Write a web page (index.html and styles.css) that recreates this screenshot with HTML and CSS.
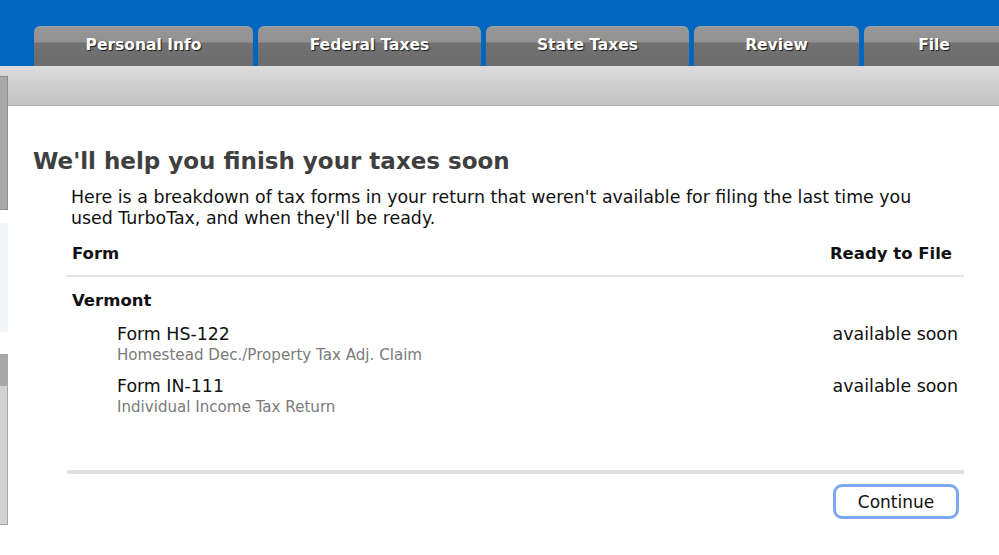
FILE: index.html
```html
<!DOCTYPE html>
<html>
<head>
<meta charset="utf-8">
<link rel="stylesheet" href="styles.css">
</head>
<body>
<div class="app">
  <header class="topbar">
    <nav class="tabs">
      <div class="tab t1">Personal Info</div>
      <div class="tab t2">Federal Taxes</div>
      <div class="tab t3">State Taxes</div>
      <div class="tab t4">Review</div>
      <div class="tab t5">File</div>
    </nav>
  </header>
  <div class="toolbar"></div>
  <div class="body">
    <aside class="side">
      <div class="side-a"></div>
      <div class="side-b"></div>
      <div class="side-c"><div class="side-c-top"></div></div>
    </aside>
    <main class="content">
      <h1 class="title">We'll help you finish your taxes soon</h1>
      <p class="intro">Here is a breakdown of tax forms in your return that weren't available for filing the last time you used TurboTax, and when they'll be ready.</p>
      <div class="table">
        <div class="thead">
          <span>Form</span>
          <span>Ready to File</span>
        </div>
        <div class="state">Vermont</div>
        <div class="row">
          <div class="form">
            <div class="fname">Form HS-122</div>
            <div class="fdesc">Homestead Dec./Property Tax Adj. Claim</div>
          </div>
          <div class="status">available soon</div>
        </div>
        <div class="row">
          <div class="form">
            <div class="fname">Form IN-111</div>
            <div class="fdesc">Individual Income Tax Return</div>
          </div>
          <div class="status">available soon</div>
        </div>
      </div>
      <div class="footer">
        <button class="btn">Continue</button>
      </div>
    </main>
  </div>
</div>
</body>
</html>
```
FILE: styles.css
```css
* { box-sizing: border-box; }
html, body { margin: 0; padding: 0; }
body {
  width: 999px;
  height: 555px;
  overflow: hidden;
  background: #fff;
  font-family: "DejaVu Sans", "Lucida Grande", Verdana, sans-serif;
}
.topbar {
  height: 66px;
  background: #0066c0;
  padding-top: 26px;
  overflow: hidden;
}
.tabs {
  display: flex;
  gap: 5px;
  padding-left: 34px;
  height: 40px;
}
.tab {
  flex: none;
  height: 40px;
  border-radius: 6px 6px 0 0;
  background: linear-gradient(#a2a2a2 0, #969696 2px, #929292 16px, #727272 17px, #6c6c6c 100%);
  color: #fff;
  font-weight: bold;
  font-size: 15.5px;
  text-align: center;
  line-height: 38px;
  text-shadow: 1px 1px 1px #1e1e1e;
}
.t1 { width: 219px; }
.t2 { width: 223px; }
.t3 { width: 203px; }
.t4 { width: 165px; }
.t5 { width: 140px; }
.toolbar {
  height: 40px;
  background: linear-gradient(#dcdcdc, #c3c3c3);
  border-bottom: 1px solid #b8b8b8;
}
.body {
  display: flex;
}
.side {
  width: 8px;
  flex: none;
  display: flex;
  flex-direction: column;
  margin-top: -30px;
}
.side-a {
  height: 134px;
  background: #a9a9a9;
  border: 1px solid #8e8e8e;
  border-left: 0;
}
.side-b {
  margin-top: 13px;
  height: 109px;
  background: #f4f5f7;
}
.side-c {
  margin-top: 22px;
  height: 171px;
  background: #d2d2d2;
  border: 1px solid #a6a6a6;
  border-left: 0;
}
.side-c-top {
  height: 31px;
  background: #a8a8a8;
}
.content {
  flex: 1;
  padding-left: 25px;
  padding-right: 35px;
}
.title {
  margin: 40px 0 0 0;
  font-size: 23px;
  font-weight: bold;
  color: #3f3f3f;
  line-height: 30px;
}
.intro {
  margin: 11px 0 0 38px;
  font-size: 17.4px;
  line-height: 21px;
  color: #111;
  width: 880px;
}
.table {
  margin-left: 34px;
}
.thead {
  display: flex;
  justify-content: space-between;
  font-weight: bold;
  font-size: 16.5px;
  color: #111;
  padding: 14px 12px 11px 5px;
  border-bottom: 2px solid #e2e2e2;
  line-height: 21px;
}
.state {
  font-weight: bold;
  font-size: 16.5px;
  color: #111;
  padding: 13px 0 0 5px;
  margin-bottom: 3px;
  line-height: 21px;
}
.row {
  display: flex;
  justify-content: space-between;
  padding: 10px 6px 0 50px;
}
.fname {
  font-size: 17.4px;
  line-height: 21px;
  color: #111;
}
.fdesc {
  font-size: 15.1px;
  line-height: 21px;
  color: #7a7a7a;
}
.status {
  font-size: 17.4px;
  line-height: 21px;
  color: #111;
}
.footer {
  margin: 52px 0 0 34px;
  border-top: 4px solid #e0e0e0;
  display: flex;
  justify-content: flex-end;
  padding-top: 10px;
  padding-right: 5px;
}
.btn {
  width: 126px;
  height: 35px;
  border: 3px solid #80a8f2;
  border-radius: 9px;
  background: #fff;
  font-family: "DejaVu Sans", "Lucida Grande", Verdana, sans-serif;
  font-size: 17px;
  color: #111;
  padding: 0;
}
```
